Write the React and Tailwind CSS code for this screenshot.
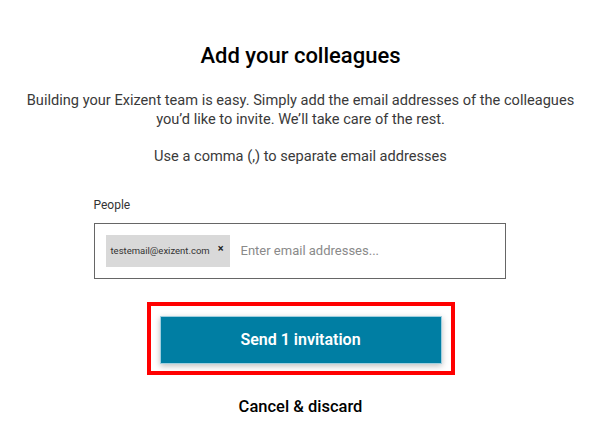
import React from 'react';

const App = () => {
  return (
    <div className="min-h-screen w-full bg-white flex flex-col items-center font-['Roboto',sans-serif] text-[#1a1a1a]">
      <h1 className="mt-[43px] text-[22px] leading-[26px] font-medium text-black">Add your colleagues</h1>

      <p className="mt-[22px] w-[566px] text-center text-[14.6px] leading-[19px] text-[#3a3a3a]">
        Building your Exizent team is easy. Simply add the email addresses of the colleagues you’d like to invite. We’ll take care of the rest.
      </p>

      <p className="mt-[18px] text-[14.6px] leading-[19px] text-[#3a3a3a]">
        Use a comma (,) to separate email addresses
      </p>

      <div className="mt-[31px] w-[412px] -translate-x-[1px]">
        <label className="block text-[12px] leading-[16px] text-[#333]">People</label>
        <div className="mt-[10px] h-[56px] border border-[#666] flex items-center px-[11px] gap-[11px]">
          <span className="h-[32px] bg-[#d9d9d9] flex items-center pl-[5px] pr-[6px] gap-[8px]">
            <span className="text-[9.5px] text-[#333]">testemail@exizent.com</span>
            <span className="text-[11px] font-bold text-[#222] -mt-[4px]">×</span>
          </span>
          <input
            type="text"
            placeholder="Enter email addresses..."
            className="flex-1 bg-transparent text-[13px] text-[#222] placeholder:text-[#8a8a8a] outline-none"
          />
        </div>
      </div>

      <div className="mt-[23px] border-4 border-[#ff0000] pt-[10px] pb-[7px] px-[9px]">
        <button className="w-[282px] h-[48px] bg-[#007ea3] border border-[#9fcfdf] text-white text-[16px] font-semibold shadow-[0_2px_6px_rgba(0,0,0,0.25)]">
          Send 1 invitation
        </button>
      </div>

      <button className="mt-[22px] text-[16.5px] leading-[20px] font-medium text-black">Cancel &amp; discard</button>
    </div>
  );
};

export default App;
